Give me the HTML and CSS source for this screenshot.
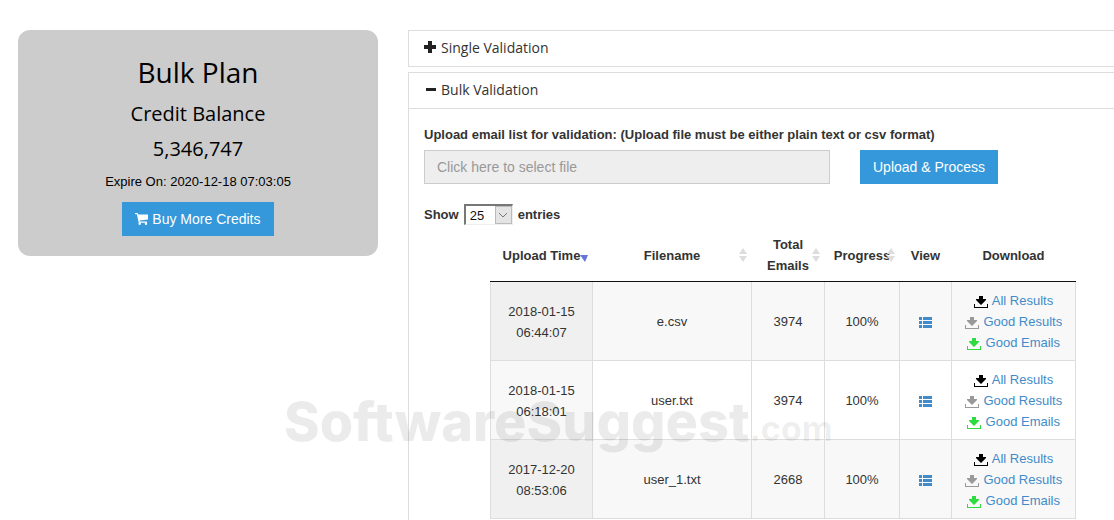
FILE: index.html
```html
<!DOCTYPE html>
<html lang="en">
<head>
    <meta charset="UTF-8">
    <meta name="viewport" content="width=device-width, initial-scale=1.0">
    <title>Email Validation</title>
    <link rel="stylesheet" href="styles.css">
</head>
<body>
    <!-- icons shared by the table rows -->
    <svg class="sprite" aria-hidden="true">
        <symbol id="icon-download" viewBox="0 0 14 12">
            <path d="M5 0h4v3h3v1L7 9 2 4V3h3z"/>
            <path d="M0 8h1v3h12V8h1v4H0z"/>
        </symbol>
        <symbol id="icon-list" viewBox="0 0 14 11">
            <path d="M0 0h3v3H0zM4 0h9v3H4zM0 4h3v3H0zM4 4h9v3H4zM0 8h3v3H0zM4 8h9v3H4z"/>
        </symbol>
        <symbol id="icon-sort" viewBox="0 0 8 14">
            <path d="M4 0l4 6H0zM4 14L0 8h8z"/>
        </symbol>
    </svg>

    <div class="container">
        <aside class="plan">
            <h2>Bulk Plan</h2>
            <h3>Credit Balance</h3>
            <h3>5,346,747</h3>
            <p>Expire On: 2020-12-18 07:03:05</p>
            <button type="button" class="btn">
                <svg class="icon-cart" width="13" height="12" viewBox="0 0 13 12" aria-hidden="true"><path d="M0 0h2.700l.4 1.500H13v5L4.600 7.600l.2.900H12v1.200H3.700L1.900 1.200H0z"/><circle cx="4.700" cy="10.800" r="1.200"/><circle cx="11" cy="10.800" r="1.200"/></svg>
                Buy More Credits
            </button>
        </aside>

        <main class="panels">
            <section class="panel">
                <h4 class="panel-heading">
                    <svg width="13" height="13" viewBox="0 0 13 13" aria-hidden="true"><path d="M4 0h4v4h4v4H8v4H4V8H0V4h4z"/></svg>
                    Single Validation
                </h4>
            </section>

            <section class="panel panel-open">
                <h4 class="panel-heading">
                    <svg width="13" height="13" viewBox="0 0 13 13" aria-hidden="true"><path d="M2 5h10v3H2z"/></svg>
                    Bulk Validation
                </h4>
                <div class="panel-body">
                    <label class="upload-label" for="upload-file">Upload email list for validation: (Upload file must be either plain text or csv format)</label>
                    <form class="upload">
                        <input type="text" id="upload-file" placeholder="Click here to select file" readonly>
                        <button type="button" class="btn">Upload &amp; Process</button>
                    </form>

                    <div class="length">
                        <label for="page-length">Show</label>
                        <span class="select-box">
                            <select id="page-length">
                                <option>10</option>
                                <option selected>25</option>
                                <option>50</option>
                                <option>100</option>
                            </select>
                            <span class="select-arrow"><svg width="8" height="5" viewBox="0 0 8 5" aria-hidden="true"><path d="M0 0l4 4 4-4"/></svg></span>
                        </span>
                        <span>entries</span>
                    </div>

                    <table class="results">
                        <thead>
                            <tr>
                                <th class="col-time">Upload Time<svg class="sort sort-active" viewBox="0 0 8 14"><path d="M0 7h8l-3 7z"/></svg></th>
                                <th class="col-file">Filename<svg class="sort"><use href="#icon-sort"/></svg></th>
                                <th class="col-total">Total Emails<svg class="sort"><use href="#icon-sort"/></svg></th>
                                <th class="col-progress">Progress<svg class="sort"><use href="#icon-sort"/></svg></th>
                                <th class="col-view">View</th>
                                <th class="col-download">Download</th>
                            </tr>
                        </thead>
                        <tbody>
                            <tr>
                                <td>2018-01-15 06:44:07</td>
                                <td>e.csv</td>
                                <td>3974</td>
                                <td>100%</td>
                                <td><a href="#" aria-label="View"><svg class="icon-list"><use href="#icon-list"/></svg></a></td>
                                <td class="downloads">
                                    <a href="#"><svg class="icon-all"><use href="#icon-download"/></svg> All Results</a>
                                    <a href="#"><svg class="icon-good"><use href="#icon-download"/></svg> Good Results</a>
                                    <a href="#"><svg class="icon-emails"><use href="#icon-download"/></svg> Good Emails</a>
                                </td>
                            </tr>
                            <tr>
                                <td>2018-01-15 06:18:01</td>
                                <td>user.txt</td>
                                <td>3974</td>
                                <td>100%</td>
                                <td><a href="#" aria-label="View"><svg class="icon-list"><use href="#icon-list"/></svg></a></td>
                                <td class="downloads">
                                    <a href="#"><svg class="icon-all"><use href="#icon-download"/></svg> All Results</a>
                                    <a href="#"><svg class="icon-good"><use href="#icon-download"/></svg> Good Results</a>
                                    <a href="#"><svg class="icon-emails"><use href="#icon-download"/></svg> Good Emails</a>
                                </td>
                            </tr>
                            <tr>
                                <td>2017-12-20 08:53:06</td>
                                <td>user_1.txt</td>
                                <td>2668</td>
                                <td>100%</td>
                                <td><a href="#" aria-label="View"><svg class="icon-list"><use href="#icon-list"/></svg></a></td>
                                <td class="downloads">
                                    <a href="#"><svg class="icon-all"><use href="#icon-download"/></svg> All Results</a>
                                    <a href="#"><svg class="icon-good"><use href="#icon-download"/></svg> Good Results</a>
                                    <a href="#"><svg class="icon-emails"><use href="#icon-download"/></svg> Good Emails</a>
                                </td>
                            </tr>
                        </tbody>
                    </table>
                </div>
            </section>
        </main>
    </div>

    <div class="watermark">SoftwareSuggest<span>.com</span></div>
</body>
</html>
```
FILE: styles.css
```css
* {
    box-sizing: border-box;
}

body {
    margin: 0;
    height: 100vh;
    overflow: hidden;
    position: relative;
    background: #fff;
    color: #333;
    font-family: "Liberation Sans", Arial, sans-serif;
    font-size: 13px;
    line-height: 21px;
}

h2, h3, h4, p {
    margin: 0;
    font-weight: 400;
}

h2, h3, h4 {
    font-family: "Open Sans", sans-serif;
}

a {
    color: #428bca;
    text-decoration: none;
}

.sprite {
    display: none;
}

/* the row runs a little past the right edge of the window */
.container {
    display: flex;
    align-items: flex-start;
    gap: 30px;
    margin-right: -44px;
    padding: 30px 0 0 18px;
}

/* plan card */
.plan {
    flex: 0 0 360px;
    display: flex;
    flex-direction: column;
    align-items: center;
    gap: 10px;
    padding: 24px 20px 20px;
    border-radius: 12px;
    background: #ccc;
    color: #000;
}

.plan h2 {
    font-size: 28px;
    line-height: 37px;
}

.plan h3 {
    font-size: 20px;
    line-height: 25px;
}

.btn {
    height: 34px;
    padding: 0 13px;
    border: 0;
    background: #3498db;
    color: #fff;
    font-family: inherit;
    font-size: 14px;
    white-space: nowrap;
    cursor: pointer;
}

.icon-cart {
    fill: #fff;
    vertical-align: -1px;
}

/* accordion */
.panels {
    flex: 1;
    display: flex;
    flex-direction: column;
    gap: 5px;
}

.panel {
    border: 1px solid #ddd;
}

.panel-heading {
    display: flex;
    align-items: center;
    gap: 4px;
    height: 35px;
    padding: 0 15px 2px;
    font-size: 14px;
}

.panel-heading svg {
    fill: #222;
}

.panel-open .panel-heading {
    height: 36px;
    border-bottom: 1px solid #ddd;
}

.panel-body {
    padding: 15px 15px 30px;
}

.upload-label,
.length {
    font-weight: 700;
}

.upload {
    display: flex;
    gap: 30px;
    margin: 5px 0 20px;
}

.upload input {
    width: 406px;
    height: 34px;
    padding: 0 12px;
    border: 1px solid #ccc;
    background: #eee;
    font-family: inherit;
    font-size: 14px;
}

.upload input::placeholder {
    color: #999;
}

.length {
    display: flex;
    gap: 5px;
    margin-bottom: 9px;
}

.select-box {
    position: relative;
}

.select-box select {
    display: block;
    width: 49px;
    height: 21px;
    padding: 0 4px;
    appearance: none;
    border: 1px solid #eee;
    border-top: 2px solid #777;
    border-left: 2px solid #777;
    border-radius: 0;
    background: #fff;
    color: #111;
    font-family: inherit;
    font-size: 13px;
}

.select-arrow {
    position: absolute;
    top: 2px;
    right: 1px;
    display: flex;
    align-items: center;
    justify-content: center;
    width: 17px;
    height: 18px;
    border: 1px solid #bbb;
    background: #e4e4e4;
    pointer-events: none;
}

.select-arrow path {
    fill: none;
    stroke: #777;
    stroke-width: 1;
}

/* results table */
.results {
    width: 585px;
    margin: 0 auto;
    table-layout: fixed;
    border-collapse: collapse;
    text-align: center;
}

.results th {
    position: relative;
    padding: 0 10px 5px;
    border-bottom: 1px solid #111;
}

.results th.col-time,
.results th.col-progress {
    padding-right: 0;
    padding-left: 0;
}

.col-time { width: 102px; }
.col-file { width: 159px; }
.col-total { width: 73px; }
.col-progress { width: 75px; }
.col-view { width: 52px; }
.col-download { width: 124px; }

.sort {
    position: absolute;
    top: 14px;
    right: 5px;
    width: 8px;
    height: 14px;
    fill: #ddd;
}

.sort-active {
    fill: #6674d9;
}

.results td {
    padding: 8px 10px 7px;
    border: 1px solid #ddd;
}

.results tbody tr:nth-child(odd) {
    background: #f8f8f8;
}

.results tbody td:first-child {
    background: #f8f8f8;
}

.results tbody tr:nth-child(odd) td:first-child {
    background: #f0f0f0;
}

.results thead + tbody tr:first-child td {
    border-top-color: #111;
}

.results .downloads {
    padding-right: 0;
    padding-left: 0;
}

.downloads a {
    display: block;
}

.downloads svg {
    width: 14px;
    height: 12px;
    margin-right: 1px;
    vertical-align: -3px;
}

.icon-all { fill: #000; }
.icon-good { fill: #999; }
.icon-emails { fill: #2edb40; }

.icon-list {
    width: 14px;
    height: 11px;
    fill: #428bca;
    vertical-align: -2px;
}

.watermark {
    position: absolute;
    top: 390px;
    left: 284px;
    color: rgba(0, 0, 0, 0.08);
    font-family: Inter, sans-serif;
    font-size: 54px;
    font-weight: 800;
    line-height: 64px;
    white-space: nowrap;
    pointer-events: none;
}

.watermark span {
    font-size: 34px;
    font-weight: 700;
}
```
